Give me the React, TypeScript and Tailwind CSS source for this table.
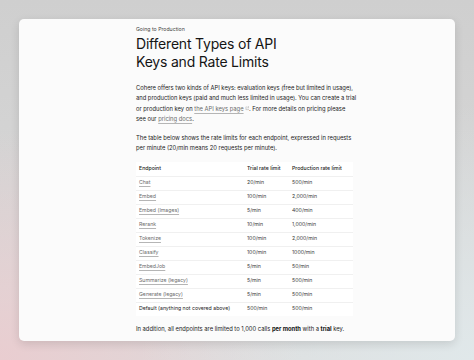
const rows: { name: string; trial: string; prod: string; link: boolean }[] = [
  { name: "Chat", trial: "20/min", prod: "500/min", link: true },
  { name: "Embed", trial: "100/min", prod: "2,000/min", link: true },
  { name: "Embed (Images)", trial: "5/min", prod: "400/min", link: true },
  { name: "Rerank", trial: "10/min", prod: "1,000/min", link: true },
  { name: "Tokenize", trial: "100/min", prod: "2,000/min", link: true },
  { name: "Classify", trial: "100/min", prod: "1000/min", link: true },
  { name: "EmbedJob", trial: "5/min", prod: "50/min", link: true },
  { name: "Summarize (legacy)", trial: "5/min", prod: "500/min", link: true },
  { name: "Generate (legacy)", trial: "5/min", prod: "500/min", link: true },
  { name: "Default (anything not covered above)", trial: "500/min", prod: "500/min", link: false },
];

function Link({ children }: { children: React.ReactNode }) {
  return (
    <span className="text-[#6b6b6b] underline decoration-[#b5b5b5] underline-offset-[1.5px]">
      {children}
    </span>
  );
}

export default function App() {
  return (
    <div
      className="w-[474px] h-[360px] overflow-hidden bg-[linear-gradient(180deg,#cfcfcf_0%,#d6d6d6_60%,#dcdcdc_100%)] relative"
      style={{ fontFamily: "Inter, 'Noto Sans', sans-serif" }}
    >
      <div className="absolute inset-0 bg-[radial-gradient(ellipse_at_0%_100%,#e9cdd0_0%,rgba(233,205,208,0)_45%)]" />
      <div className="absolute inset-0 bg-[radial-gradient(ellipse_at_100%_100%,#e0e8ea_0%,rgba(224,232,234,0)_50%)]" />
      <div className="relative pt-[19px] pl-[19px]">
        <div className="w-[436px] h-[322px] bg-[#fbfbfb] rounded-[5px] shadow-[0_3px_10px_rgba(0,0,0,0.12)] pl-[117px] pt-[5px] text-[#1c1c1c]">
          <div className="w-[230px]">
            <div className="text-[5.2px] leading-[6px] text-[#444] pt-[2px]">Going to Production</div>
            <h1 className="mt-[3px] text-[14px] leading-[18px] tracking-[-0.2px] font-normal text-[#151515]">
              Different Types of API
              <br />
              Keys and Rate Limits
            </h1>
            <p className="mt-[12px] text-[5.8px] leading-[10.3px] text-[#222] whitespace-nowrap">
              Cohere offers two kinds of API keys: evaluation keys (free but limited in usage),
              <br />
              and production keys (paid and much less limited in usage). You can create a trial
              <br />
              or production key on <Link>the API keys page</Link>
              <svg viewBox="0 0 10 10" className="inline-block w-[4.5px] h-[4.5px] ml-[1px] align-baseline">
                <path d="M4 2H2v6h6V6M6 1.5h2.5V4M8.5 1.5 4.5 5.5" fill="none" stroke="#9a9a9a" strokeWidth="1" />
              </svg>
              . For more details on pricing please
              <br />
              see our <Link>pricing docs</Link>.
            </p>
            <p className="mt-[8.7px] text-[5.8px] leading-[10.5px] text-[#222] whitespace-nowrap">
              The table below shows the rate limits for each endpoint, expressed in requests
              <br />
              per minute (20/min means 20 requests per minute).
            </p>
            <div className="mt-[8px] bg-white text-[5.2px] w-[217px]">
              <div className="flex h-[14px] items-center font-medium text-[#222]">
                <div className="w-[111px] pl-[3px]">Endpoint</div>
                <div className="w-[45px]">Trial rate limit</div>
                <div>Production rate limit</div>
              </div>
              {rows.map((r) => (
                <div key={r.name} className="flex h-[14px] items-center border-t border-[#f0f0f0] text-[#3a3a3a]">
                  <div className="w-[111px] pl-[3px]">
                    {r.link ? <Link>{r.name}</Link> : <span className="text-[#222]">{r.name}</span>}
                  </div>
                  <div className="w-[45px]">{r.trial}</div>
                  <div>{r.prod}</div>
                </div>
              ))}
            </div>
            <p className="mt-[8px] text-[5.8px] leading-[10px] text-[#222] whitespace-nowrap">
              In addition, all endpoints are limited to 1,000 calls <b className="font-bold text-[#111]">per month</b> with a{" "}
              <b className="font-bold text-[#111]">trial</b> key.
            </p>
          </div>
        </div>
      </div>
    </div>
  );
}
